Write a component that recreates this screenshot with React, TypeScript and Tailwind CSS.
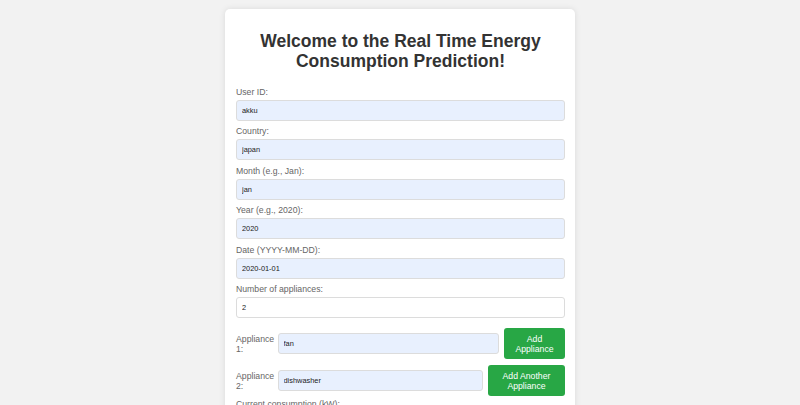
import React, { useState } from "react";

type Field = { id: string; label: string; value: string; filled?: boolean };

const FIELDS: Field[] = [
  { id: "user", label: "User ID:", value: "akku", filled: true },
  { id: "country", label: "Country:", value: "japan", filled: true },
  { id: "month", label: "Month (e.g., Jan):", value: "jan", filled: true },
  { id: "year", label: "Year (e.g., 2020):", value: "2020", filled: true },
  { id: "date", label: "Date (YYYY-MM-DD):", value: "2020-01-01", filled: true },
  { id: "count", label: "Number of appliances:", value: "2" },
];

const inputBase =
  "block w-full h-[21px] px-[5px] rounded-[3px] border border-[#dcdcdc] text-[7.4px] text-[#222] outline-none";

const App: React.FC = () => {
  const [values, setValues] = useState<Record<string, string>>(
    Object.fromEntries(FIELDS.map((f) => [f.id, f.value]))
  );
  const [appliances, setAppliances] = useState<string[]>(["fan", "dishwasher"]);

  const update = (id: string, v: string) => setValues({ ...values, [id]: v });

  return (
    <div className="min-h-screen bg-[#f2f2f2] pt-[9px] pb-8 font-['Liberation_Sans',Arial,sans-serif]">
      <div className="w-[350px] mx-auto bg-white rounded-[5px] shadow-[0_0_6px_rgba(0,0,0,0.1)] pt-[11px] pl-[11px] pr-[10px] pb-[11px]">
        {/* Title */}
        <h1 className="mt-[12px] mb-[15.5px] text-center text-[17.5px] leading-[19.5px] font-bold text-[#333]">
          Welcome to the Real Time Energy Consumption Prediction!
        </h1>

        {FIELDS.map((f) => (
          <div key={f.id}>
            <label className="block text-[8.7px] leading-[10px] text-[#666] mb-[3px]">
              {f.label}
            </label>
            <input
              className={`${inputBase} mb-[5.5px] ${f.filled ? "bg-[#e8f0fe]" : "bg-white"}`}
              value={values[f.id]}
              onChange={(e) => update(f.id, e.target.value)}
            />
          </div>
        ))}

        {/* Appliance rows */}
        <div className="mt-[10px] flex items-center">
          <label className="flex-none w-[38.5px] mr-[3px] text-[8.7px] leading-[10px] text-[#666]">
            Appliance 1:
          </label>
          <input
            className={`${inputBase} flex-1 min-w-0 bg-[#e8f0fe]`}
            value={appliances[0]}
            onChange={(e) => setAppliances([e.target.value, appliances[1]])}
          />
          <button className="flex-none w-[61px] ml-[5px] px-[11px] py-[5.5px] rounded-[3px] bg-[#28a745] text-white text-[8.7px] leading-[10px] text-center">
            Add Appliance
          </button>
        </div>

        <div className="mt-[6px] flex items-center">
          <label className="flex-none w-[38.5px] mr-[3px] text-[8.7px] leading-[10px] text-[#666]">
            Appliance 2:
          </label>
          <input
            className={`${inputBase} flex-1 min-w-0 bg-[#e8f0fe]`}
            value={appliances[1]}
            onChange={(e) => setAppliances([appliances[0], e.target.value])}
          />
          <button className="flex-none w-[77px] ml-[5px] px-[11px] py-[5.5px] rounded-[3px] bg-[#28a745] text-white text-[8.7px] leading-[10px] text-center">
            Add Another Appliance
          </button>
        </div>

        <div className="mt-[3px]">
          <label className="block text-[8.7px] leading-[10px] text-[#666] mb-[3px]">
            Current consumption (kW):
          </label>
          <input className={`${inputBase} bg-white mb-[5.5px]`} defaultValue="" />
        </div>
      </div>
    </div>
  );
};

export default App;
